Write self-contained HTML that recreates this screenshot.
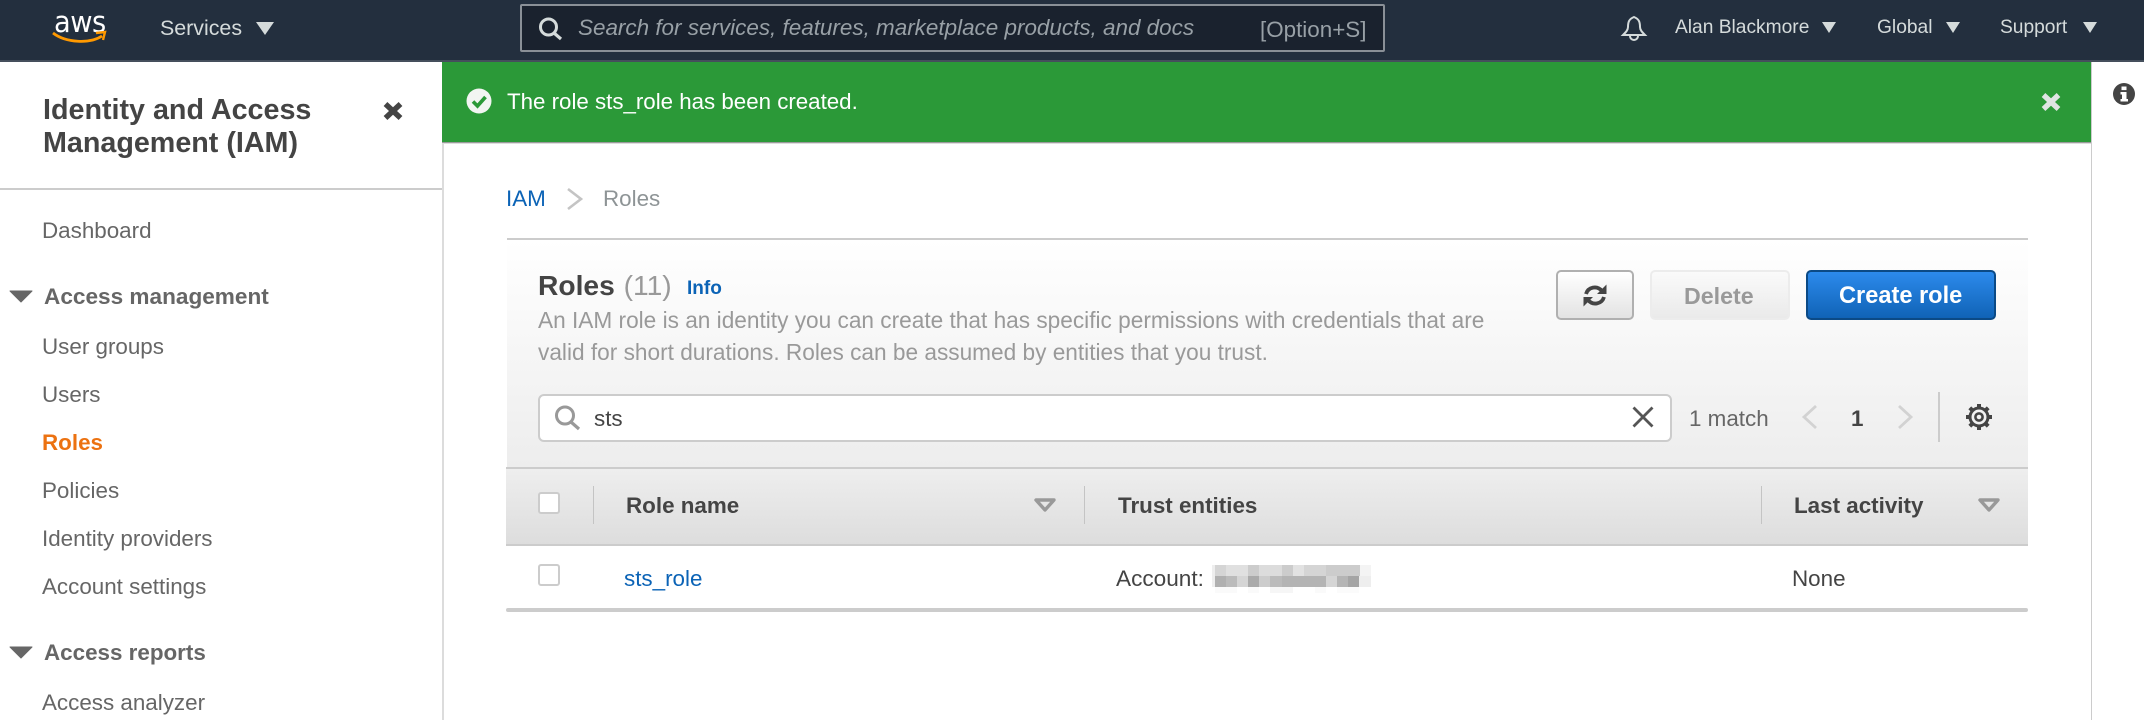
<!DOCTYPE html>
<html lang="en">
<head>
<meta charset="utf-8">
<title>IAM Roles</title>
<style>
html,body{margin:0;padding:0;background:#fff}
body{width:2144px;height:720px;position:relative;overflow:hidden;font-family:"Liberation Sans",Arial,sans-serif;font-size:22.4px;color:#444}
.a{position:absolute}
.t{position:absolute;white-space:nowrap;line-height:30px;height:30px}
.b{font-weight:bold}
.n{color:#666}
.h{color:#d5dbdb;font-size:19.2px}
svg{position:absolute;display:block;overflow:visible}
</style>
</head>
<body>
<!-- header -->
<div class="a" style="left:0;top:0;width:2144px;height:60px;background:#232f3e"></div>
<div class="a" style="left:0;top:60px;width:2144px;height:2px;background:#454f5c"></div>
<div class="t" style="left:54px;top:7px;font-size:29px;color:#fff;line-height:30px;letter-spacing:-.5px;font-family:'DejaVu Sans','Liberation Sans',sans-serif;transform:scaleX(.94);transform-origin:left">aws</div>
<svg style="left:52px;top:30px" width="56" height="16" viewBox="0 0 56 16"><path d="M1 3C14 13 38 14 50 6" fill="none" stroke="#f90" stroke-width="2.8"/><path d="M44 3L53 2L51 10" fill="none" stroke="#f90" stroke-width="2.4"/></svg>
<div class="t h" style="left:160px;top:13px;font-size:21.4px">Services</div>
<svg style="left:256px;top:22px" width="18" height="13"><path d="M0 0H18L9 13Z" fill="#d5dbdb"/></svg>
<div class="a" style="left:520px;top:4px;width:861px;height:44px;background:#1a222e;border:2px solid #8a9097;border-radius:2px"></div>
<svg style="left:538px;top:17px" width="26" height="24" viewBox="0 0 26 24"><circle cx="10.5" cy="10" r="8" fill="none" stroke="#d5dbdb" stroke-width="3"/><path d="M16 16L23 22" stroke="#d5dbdb" stroke-width="3.2"/></svg>
<div class="t" style="left:578px;top:13px;font-style:italic;color:#98a0a6;font-size:22.45px">Search for services, features, marketplace products, and docs</div>
<div class="t" style="left:1260px;top:15px;color:#98a0a6;font-size:22.4px">[Option+S]</div>
<svg style="left:1621px;top:15px" width="26" height="26" viewBox="0 0 26 26"><path d="M13 2C8 4 7 7 7 12C7 15 5 17 2 20H24C21 17 19 15 19 12C19 7 18 4 13 2Z" fill="none" stroke="#d5dbdb" stroke-width="2"/><path d="M9 21A4 4 0 0 0 17 21" fill="none" stroke="#d5dbdb" stroke-width="2"/></svg>
<div class="t h" style="left:1675px;top:13px">Alan Blackmore</div>
<svg style="left:1822px;top:22px" width="14" height="11"><path d="M0 0H14L7 11Z" fill="#d5dbdb"/></svg>
<div class="t h" style="left:1877px;top:13px">Global</div>
<svg style="left:1946px;top:22px" width="14" height="11"><path d="M0 0H14L7 11Z" fill="#d5dbdb"/></svg>
<div class="t h" style="left:2000px;top:13px">Support</div>
<svg style="left:2083px;top:22px" width="14" height="11"><path d="M0 0H14L7 11Z" fill="#d5dbdb"/></svg>

<!-- sidebar -->
<div class="a" style="left:442px;top:62px;width:2px;height:658px;background:#dcdcdc"></div>
<div class="t b" style="left:43px;top:94px;font-size:28.7px;color:#444;line-height:33px;height:66px">Identity and Access<br>Management (IAM)</div>
<svg style="left:382px;top:101px" width="22" height="20" viewBox="0 0 22 20"><path d="M3.5 3L18.5 17M18.5 3L3.5 17" stroke="#444" stroke-width="5.5"/></svg>
<div class="a" style="left:0;top:188px;width:442px;height:2px;background:#ccc"></div>
<div class="t n" style="left:42px;top:216px">Dashboard</div>
<svg style="left:9px;top:290px" width="24" height="13"><path d="M1 1H23L12 12Z" fill="#666" stroke="#666" stroke-width="1" stroke-linejoin="round"/></svg>
<div class="t b n" style="left:44px;top:282px;font-size:22.6px">Access management</div>
<div class="t n" style="left:42px;top:332px">User groups</div>
<div class="t n" style="left:42px;top:380px">Users</div>
<div class="t b" style="left:42px;top:428px;color:#ec7211">Roles</div>
<div class="t n" style="left:42px;top:476px">Policies</div>
<div class="t n" style="left:42px;top:524px">Identity providers</div>
<div class="t n" style="left:42px;top:572px">Account settings</div>
<svg style="left:9px;top:646px" width="24" height="13"><path d="M1 1H23L12 12Z" fill="#666" stroke="#666" stroke-width="1" stroke-linejoin="round"/></svg>
<div class="t b n" style="left:44px;top:638px">Access reports</div>
<div class="t n" style="left:42px;top:688px">Access analyzer</div>

<!-- banner -->
<div class="a" style="left:442px;top:62px;width:1649px;height:80px;background:#2b9938"></div>
<div class="a" style="left:442px;top:142px;width:1649px;height:1px;background:#9a9a9a"></div>
<div class="a" style="left:442px;top:143px;width:1649px;height:1px;background:#ddd"></div>
<svg style="left:466px;top:88px" width="26" height="26" viewBox="0 0 26 26"><circle cx="13" cy="13" r="12.5" fill="#f2f5f2"/><path d="M7 13.5L11.5 18L19.5 9" fill="none" stroke="#2b9938" stroke-width="3.6"/></svg>
<div class="t" style="left:507px;top:87px;color:#fff;font-size:22.3px">The role sts_role has been created.</div>
<svg style="left:2041px;top:93px" width="20" height="18" viewBox="0 0 20 18"><path d="M2.5 2L17.5 16M17.5 2L2.5 16" stroke="#dfe5e3" stroke-width="5.4"/></svg>
<div class="a" style="left:2091px;top:62px;width:1px;height:658px;background:#ccc"></div>
<svg style="left:2113px;top:83px" width="22" height="22" viewBox="0 0 22 22"><circle cx="11" cy="11" r="11" fill="#444"/><rect x="8.5" y="3.5" width="5" height="3.6" fill="#fff"/><path d="M7.5 9H13.5V16H15V18.5H7.5V16H9V11.5H7.5Z" fill="#fff"/></svg>

<!-- breadcrumb -->
<div class="t" style="left:506px;top:184px;color:#0b63b6">IAM</div>
<svg style="left:566px;top:187px" width="18" height="24" viewBox="0 0 18 24"><path d="M2 2L15 12L2 22" fill="none" stroke="#c4c4c4" stroke-width="2.6"/></svg>
<div class="t" style="left:603px;top:184px;color:#8e9496">Roles</div>
<div class="a" style="left:507px;top:238px;width:1521px;height:2px;background:#ccc"></div>

<!-- panel -->
<div class="a" style="left:507px;top:240px;width:1521px;height:227px;background:linear-gradient(#fff,#ededed)"></div>
<div class="t b" style="left:538px;top:270px;font-size:28.2px;color:#444">Roles <span style="font-weight:normal;color:#999;margin-left:1px">(11)</span></div>
<div class="t b" style="left:687px;top:274px;font-size:19px;color:#0b63b6">Info</div>
<div class="t" style="left:538px;top:304px;color:#999;line-height:32px;height:64px;font-size:22.65px">An IAM role is an identity you can create that has specific permissions with credentials that are<br>valid for short durations. Roles can be assumed by entities that you trust.</div>

<div class="a" style="left:1556px;top:270px;width:74px;height:46px;border:2px solid #b0b0b0;border-radius:5px;background:linear-gradient(#fff,#e3e3e3)"></div>
<svg style="left:1583px;top:284px" width="24" height="23" viewBox="0 0 24 23"><path d="M3 10C5 3 14 1 19 7" fill="none" stroke="#444" stroke-width="3.8"/><path d="M14 10H23.5V.5Z" fill="#444"/><path d="M21 13C19 20 10 22 5 16" fill="none" stroke="#444" stroke-width="3.8"/><path d="M10 13H.5V22.5Z" fill="#444"/></svg>
<div class="a" style="left:1650px;top:270px;width:136px;height:46px;border:2px solid #ececec;border-radius:5px;background:linear-gradient(#fafafa,#eaeaea)"></div>
<div class="t b" style="left:1684px;top:281px;color:#999;font-size:23.2px">Delete</div>
<div class="a" style="left:1806px;top:270px;width:186px;height:46px;border:2px solid #0b4a86;border-radius:5px;background:linear-gradient(#2c8aec,#1063b6)"></div>
<div class="t b" style="left:1839px;top:281px;color:#fff;font-size:23.6px">Create role</div>

<div class="a" style="left:538px;top:394px;width:1130px;height:44px;border:2px solid #ccc;border-radius:6px;background:#fff"></div>
<svg style="left:554px;top:405px" width="28" height="26" viewBox="0 0 28 26"><circle cx="11" cy="10.5" r="8.5" fill="none" stroke="#999" stroke-width="3"/><path d="M17 17L25 24" stroke="#999" stroke-width="3.2"/></svg>
<div class="t" style="left:594px;top:404px;color:#444">sts</div>
<svg style="left:1632px;top:406px" width="22" height="22" viewBox="0 0 22 22"><path d="M1.5 1.5L20.5 20.5M20.5 1.5L1.5 20.5" stroke="#555" stroke-width="2.8"/></svg>
<div class="t n" style="left:1689px;top:404px">1 match</div>
<svg style="left:1801px;top:404px" width="17" height="26" viewBox="0 0 17 26"><path d="M15 2L3 13L15 24" fill="none" stroke="#d2d2d2" stroke-width="2.8"/></svg>
<div class="t b" style="left:1851px;top:404px;color:#444">1</div>
<svg style="left:1897px;top:404px" width="17" height="26" viewBox="0 0 17 26"><path d="M2 2L14 13L2 24" fill="none" stroke="#d2d2d2" stroke-width="2.8"/></svg>
<div class="a" style="left:1938px;top:392px;width:2px;height:50px;background:#ccc"></div>
<svg style="left:1965px;top:403px" width="28" height="28" viewBox="0 0 28 28"><circle cx="14" cy="14" r="9" fill="none" stroke="#444" stroke-width="3"/><circle cx="14" cy="14" r="3.6" fill="none" stroke="#444" stroke-width="2.6"/><path d="M14 1V5M14 23V27M1 14H5M23 14H27M4.8 4.8L7.6 7.6M20.4 20.4L23.2 23.2M4.8 23.2L7.6 20.4M20.4 7.6L23.2 4.8" stroke="#444" stroke-width="4"/></svg>

<!-- table -->
<div class="a" style="left:506px;top:467px;width:1522px;height:2px;background:#ccc"></div>
<div class="a" style="left:506px;top:469px;width:1522px;height:75px;background:linear-gradient(#eee,#ddd)"></div>
<div class="a" style="left:506px;top:544px;width:1522px;height:2px;background:#ccc"></div>
<div class="a" style="left:538px;top:492px;width:18px;height:18px;border:2px solid #ccc;border-radius:3px;background:#fff"></div>
<div class="a" style="left:593px;top:486px;width:1px;height:38px;background:#c4c4c4"></div>
<div class="t b" style="left:626px;top:491px;color:#444">Role name</div>
<svg style="left:1033px;top:498px" width="24" height="14" viewBox="0 0 24 14"><path d="M3 2H21L12 12Z" fill="none" stroke="#999" stroke-width="3.4" stroke-linejoin="round"/></svg>
<div class="a" style="left:1084px;top:486px;width:1px;height:38px;background:#c4c4c4"></div>
<div class="t b" style="left:1118px;top:491px;color:#444">Trust entities</div>
<div class="a" style="left:1761px;top:486px;width:1px;height:38px;background:#c4c4c4"></div>
<div class="t b" style="left:1794px;top:491px;color:#444">Last activity</div>
<svg style="left:1977px;top:498px" width="24" height="14" viewBox="0 0 24 14"><path d="M3 2H21L12 12Z" fill="none" stroke="#999" stroke-width="3.4" stroke-linejoin="round"/></svg>

<div class="a" style="left:538px;top:564px;width:18px;height:18px;border:2px solid #ccc;border-radius:3px;background:#fff"></div>
<div class="t" style="left:624px;top:564px;color:#0b63b6">sts_role</div>
<div class="t" style="left:1116px;top:564px;color:#444;font-size:22.6px">Account:</div>
<svg style="left:1212px;top:565px" width="160" height="28" shape-rendering="crispEdges">
<rect x="0" y="0" width="3" height="22" fill="#eee"/>
<rect x="3" y="0" width="11" height="11" fill="#d5d5d5"/><rect x="14" y="0" width="22" height="11" fill="#e0e0e0"/><rect x="36" y="0" width="11" height="11" fill="#ccc"/><rect x="47" y="0" width="23" height="11" fill="#dcdcdc"/><rect x="70" y="0" width="11" height="11" fill="#ccc"/><rect x="81" y="0" width="11" height="11" fill="#e2e2e2"/><rect x="92" y="0" width="22" height="11" fill="#d5d5d5"/><rect x="114" y="0" width="34" height="11" fill="#ccc"/><rect x="148" y="0" width="11" height="11" fill="#f4f4f4"/>
<rect x="3" y="11" width="11" height="11" fill="#b0b0b0"/><rect x="14" y="11" width="11" height="11" fill="#bbb"/><rect x="25" y="11" width="11" height="11" fill="#d5d5d5"/><rect x="36" y="11" width="11" height="11" fill="#aaa"/><rect x="47" y="11" width="11" height="11" fill="#ccc"/><rect x="58" y="11" width="12" height="11" fill="#bbb"/><rect x="70" y="11" width="44" height="11" fill="#b4b4b4"/><rect x="114" y="11" width="11" height="11" fill="#d5d5d5"/><rect x="125" y="11" width="11" height="11" fill="#b5b5b5"/><rect x="136" y="11" width="11" height="11" fill="#a5a5a5"/><rect x="147" y="11" width="12" height="11" fill="#eee"/>
<rect x="3" y="22" width="22" height="6" fill="#fafafa"/><rect x="36" y="22" width="11" height="6" fill="#fafafa"/><rect x="58" y="22" width="23" height="6" fill="#f6f6f6"/><rect x="103" y="22" width="11" height="6" fill="#fafafa"/><rect x="125" y="22" width="22" height="6" fill="#fbfbfb"/>
</svg>
<div class="t" style="left:1792px;top:564px;color:#444">None</div>
<div class="a" style="left:506px;top:608px;width:1522px;height:4px;background:#ccc;border-radius:2px"></div>
</body>
</html>
